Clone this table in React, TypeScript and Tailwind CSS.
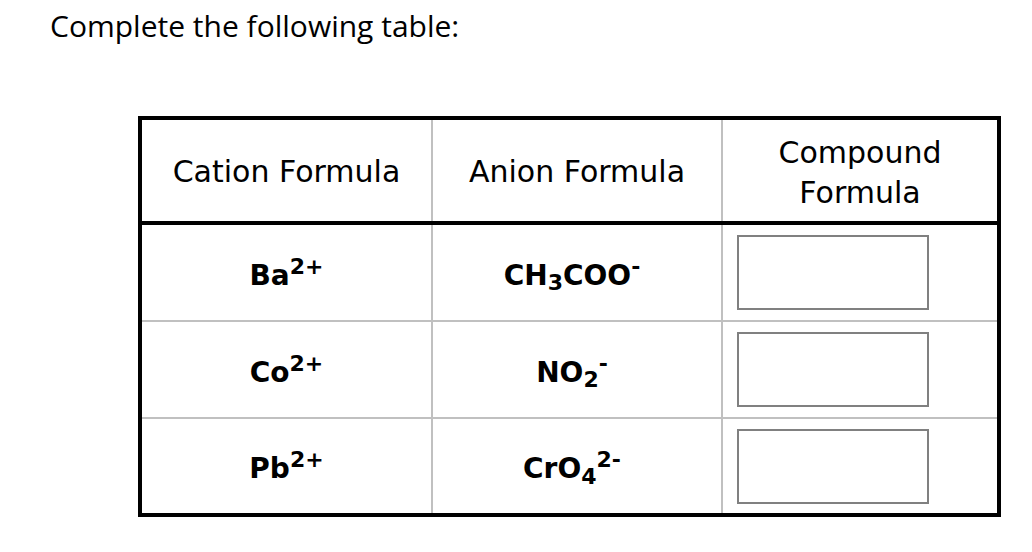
export default function App() {
  const rows = [
    {
      cation: (
        <>
          Ba<sup className="text-[22px]">2+</sup>
        </>
      ),
      anion: (
        <>
          CH<sub className="text-[22px]">3</sub>COO<sup className="text-[22px]">-</sup>
        </>
      ),
    },
    {
      cation: (
        <>
          Co<sup className="text-[22px]">2+</sup>
        </>
      ),
      anion: (
        <>
          NO<sub className="text-[22px]">2</sub>
          <sup className="text-[22px]">-</sup>
        </>
      ),
    },
    {
      cation: (
        <>
          Pb<sup className="text-[22px]">2+</sup>
        </>
      ),
      anion: (
        <>
          CrO<sub className="text-[22px]">4</sub>
          <sup className="text-[22px]">2-</sup>
        </>
      ),
    },
  ];

  return (
    <div className="min-h-screen bg-white text-black">
      <div className="pl-[50px] pt-[3px] font-['Open_Sans',sans-serif] text-[30px] leading-[45px]">
        Complete the following table:
      </div>

      <div className="ml-[138px] mt-[68px] w-[863px] border-4 border-black font-['DejaVu_Sans',Verdana,sans-serif]">
        <div className="grid h-[105px] grid-cols-[289px_290px_276px] border-b-4 border-black text-[30px]">
          <div className="flex items-center justify-center pt-[2px]">Cation Formula</div>
          <div className="flex items-center justify-center border-l-2 border-[#c0c0c0] pt-[2px]">
            Anion Formula
          </div>
          <div className="flex flex-col items-center justify-center border-l-2 border-[#c0c0c0] pt-[4px] leading-[40px]">
            <span>Compound</span>
            <span>Formula</span>
          </div>
        </div>

        {rows.map((r, i) => (
          <div
            key={i}
            className={
              i < 2
                ? "grid h-[97px] grid-cols-[289px_290px_276px] border-b-2 border-[#c0c0c0]"
                : "grid h-[94px] grid-cols-[289px_290px_276px]"
            }
          >
            <div className="flex items-center justify-center pt-[6px] text-[28px] font-bold">
              <span>{r.cation}</span>
            </div>
            <div className="flex items-center justify-center border-l-2 border-[#c0c0c0] pr-[10px] pt-[6px] text-[28px] font-bold">
              <span>{r.anion}</span>
            </div>
            <div className="flex items-center border-l-2 border-[#c0c0c0] pl-[14px]">
              <input
                type="text"
                className="h-[75px] w-[192px] border-2 border-[#808080] bg-white outline-none"
              />
            </div>
          </div>
        ))}
      </div>
    </div>
  );
}
